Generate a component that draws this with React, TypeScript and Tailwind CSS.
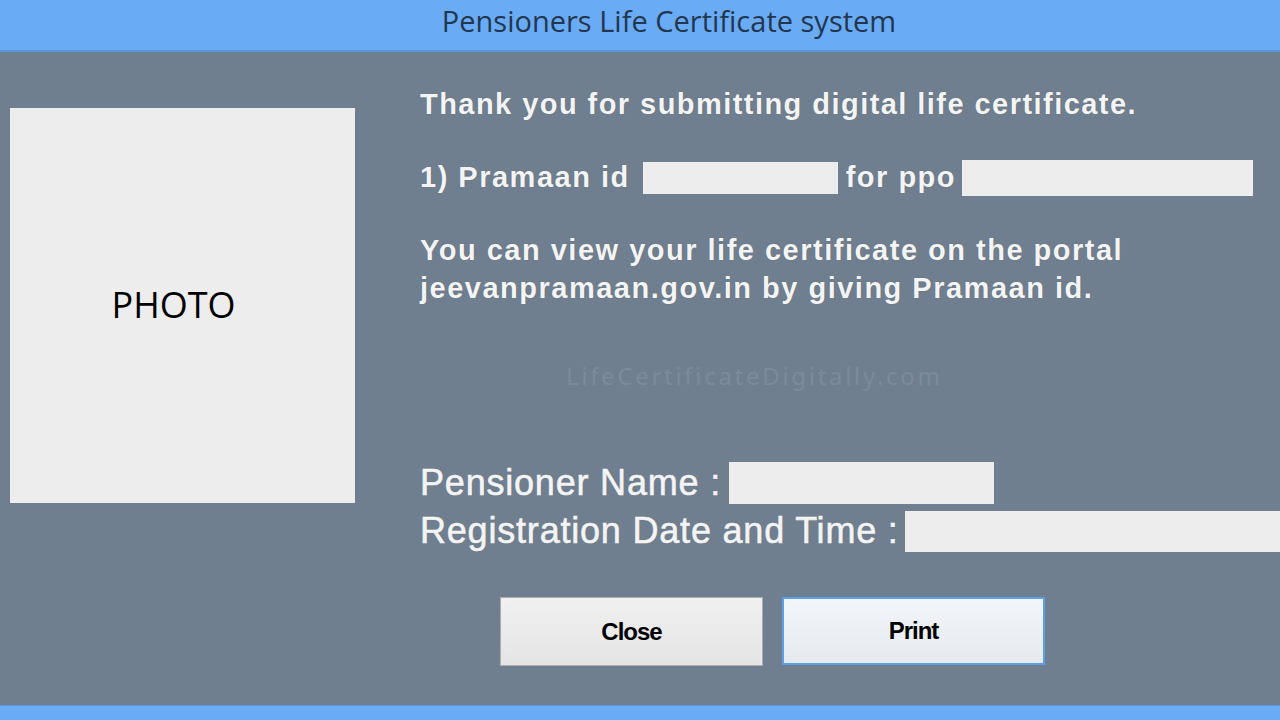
import React from "react";

const uiFont = "font-['Liberation_Sans',Arial,sans-serif]";
const blankBox = "bg-[#ededed]";

export default function App() {
  return (
    <div className="flex h-[720px] w-[1280px] flex-col overflow-hidden bg-[#707f8f]">
      {/* Title bar */}
      <div className="flex h-[52px] shrink-0 items-center justify-center border-b-2 border-[#5e95d6] bg-[#6aabf6] pb-[8px]">
        <span className="pl-[58px] font-['Open_Sans','Noto_Sans',sans-serif] text-[29px] text-[#22374f]">
          Pensioners Life Certificate system
        </span>
      </div>

      {/* Body */}
      <div className="flex flex-1 overflow-hidden">
        <div className="pl-[10px] pt-[56px]">
          <div
            className={`flex h-[395px] w-[345px] items-center justify-center ${blankBox}`}
          >
            <span className="mb-[2px] mr-[18px] font-['Open_Sans','Noto_Sans',sans-serif] text-[36px] text-black">
              PHOTO
            </span>
          </div>
        </div>

        <div
          className={`flex flex-1 flex-col pl-[65px] pt-[33px] text-[#f4f4f4] ${uiFont} font-bold [text-shadow:0_0_1px_rgba(0,0,0,0.25)]`}
        >
          <div className="flex h-[40px] items-center text-[29px] tracking-[1.45px]">
            Thank you for submitting digital life certificate.
          </div>

          <div className="mt-[33px] flex h-[40px] items-center text-[29px] tracking-[1.5px]">
            <span>1) Pramaan id</span>
            <span className={`ml-[13px] h-[32px] w-[195px] ${blankBox}`} />
            <span className="ml-[8px]">for ppo</span>
            <span className={`ml-[6px] h-[36px] w-[291px] ${blankBox}`} />
          </div>

          <div className="mt-[33px] text-[29px] leading-[38px] tracking-[1.5px]">
            <div>You can view your life certificate on the portal</div>
            <div>jeevanpramaan.gov.in by giving Pramaan id.</div>
          </div>

          <div className="mt-[54px] flex h-[30px] items-center pl-[146px] font-['Noto_Sans','Open_Sans',sans-serif] text-[24px] font-normal tracking-[2.7px] text-[#7c8a9b] [text-shadow:none]">
            LifeCertificateDigitally.com
          </div>

          <div className="mt-[69px] flex h-[46px] items-center text-[36px] font-normal tracking-[0.8px] [-webkit-text-stroke:0.6px_#f4f4f4]">
            <span>Pensioner Name :</span>
            <span className={`ml-[8px] h-[42px] w-[265px] ${blankBox}`} />
          </div>

          <div className="mt-[2px] flex h-[46px] items-center text-[36px] font-normal tracking-[0.8px] [-webkit-text-stroke:0.6px_#f4f4f4]">
            <span>Registration Date and Time :</span>
            <span className={`ml-[6px] h-[41px] flex-1 ${blankBox}`} />
          </div>

          <div className="mt-[43px] flex gap-[19px] pl-[80px]">
            <button
              type="button"
              className="flex h-[69px] w-[263px] items-center justify-center border border-[#acacac] bg-gradient-to-b from-[#f0f0f0] to-[#e5e5e5] text-[24px] font-bold tracking-[-1px] text-black [text-shadow:none]"
            >
              Close
            </button>
            <button
              type="button"
              className="flex h-[68px] w-[263px] items-center justify-center border-2 border-[#5b9fe4] bg-gradient-to-b from-[#f2f6fb] to-[#e6eaee] text-[24px] font-bold tracking-[-1px] text-black [text-shadow:none]"
            >
              Print
            </button>
          </div>
        </div>
      </div>

      {/* Bottom bar */}
      <div className="h-[15px] shrink-0 border-t border-[#5e95d6] bg-[#6aabf6]" />
    </div>
  );
}
